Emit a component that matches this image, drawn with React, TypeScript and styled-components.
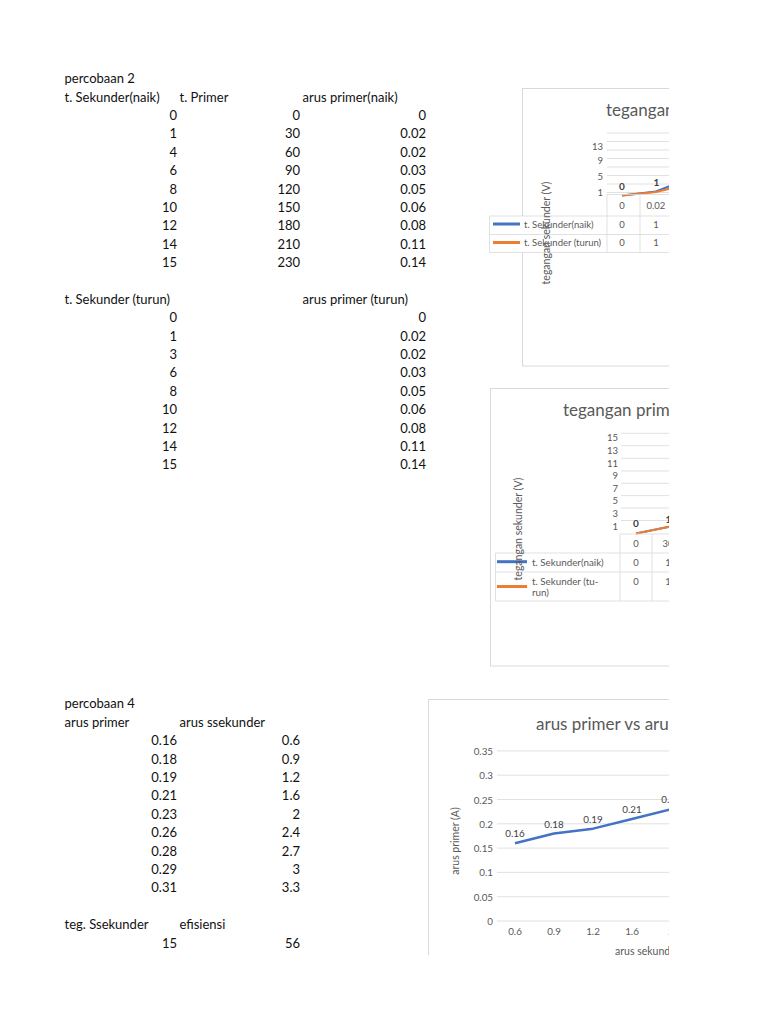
import React from "react";
import styled, { createGlobalStyle } from "styled-components";

const Global = createGlobalStyle`
  html, body { margin: 0; padding: 0; background: #fff; }
`;

const FONT = "Lato, Carlito, 'Liberation Sans', sans-serif";

const Page = styled.div`
  position: relative;
  width: 669px;
  height: 955px;
  overflow: hidden;
  background: #fff;
`;

const Sheet = styled.div`
  display: grid;
  grid-template-columns: 115px 123px 126px;
  grid-auto-rows: 18.4px;
  padding: 69px 0 0 63px;
  font-family: ${FONT};
  font-size: 13px;
  color: #111;
`;

const Cell = styled.div<{ $num?: boolean }>`
  display: flex;
  align-items: center;
  justify-content: ${(p) => (p.$num ? "flex-end" : "flex-start")};
  padding: 0 1px 0 1.5px;
  white-space: nowrap;
`;

const ChartLayer = styled.svg<{ $x: number; $y: number; $w: number; $h: number }>`
  position: absolute;
  left: ${(p) => p.$x}px;
  top: ${(p) => p.$y}px;
  width: ${(p) => p.$w}px;
  height: ${(p) => p.$h}px;
  font-family: ${FONT};
`;

type C = string | number | null;
const rows: C[][] = [
  ["percobaan 2", null, null],
  ["t. Sekunder(naik)", "t. Primer", "arus primer(naik)"],
  [0, 0, 0],
  [1, 30, 0.02],
  [4, 60, 0.02],
  [6, 90, 0.03],
  [8, 120, 0.05],
  [10, 150, 0.06],
  [12, 180, 0.08],
  [14, 210, 0.11],
  [15, 230, 0.14],
  [null, null, null],
  ["t. Sekunder (turun)", null, "arus primer (turun)"],
  [0, null, 0],
  [1, null, 0.02],
  [3, null, 0.02],
  [6, null, 0.03],
  [8, null, 0.05],
  [10, null, 0.06],
  [12, null, 0.08],
  [14, null, 0.11],
  [15, null, 0.14],
  ...Array.from({ length: 12 }, () => [null, null, null] as C[]),
  ["percobaan 4", null, null],
  ["arus primer", "arus ssekunder", null],
  [0.16, 0.6, null],
  [0.18, 0.9, null],
  [0.19, 1.2, null],
  [0.21, 1.6, null],
  [0.23, 2, null],
  [0.26, 2.4, null],
  [0.28, 2.7, null],
  [0.29, 3, null],
  [0.31, 3.3, null],
  [null, null, null],
  ["teg. Ssekunder", "efisiensi", null],
  [15, 56, null],
];

const GRID = "#d9d9d9";
const TXT = "#595959";
const BLUE = "#4472c4";
const ORANGE = "#ed7d31";

const Chart1 = () => {
  const grid = [133, 141.5, 150, 158.5, 167, 175.5, 184];
  return (
    <ChartLayer $x={485} $y={85} $w={184} $h={290} viewBox="485 85 184 290">
      <rect x={522.5} y={88.5} width={200} height={277.5} fill="#fff" stroke={GRID} />
      <text x={606} y={116} fontSize={17} fill={TXT}>tegangan primer vs tegangan sekunder</text>
      {grid.map((y) => (
        <line key={y} x1={607} x2={680} y1={y} y2={y} stroke={GRID} strokeWidth={0.8} />
      ))}
      <line x1={607} x2={680} y1={192.5} y2={192.5} stroke={GRID} strokeWidth={0.8} />
      {[
        ["13", 146],
        ["9", 160],
        ["5", 176],
        ["1", 192],
      ].map(([t, y]) => (
        <text key={t} x={603} y={y as number} fontSize={9.5} fill={TXT} textAnchor="end" dominantBaseline="central">
          {t}
        </text>
      ))}
      <polyline points="622,195.5 656,191.5 690,178" fill="none" stroke={BLUE} strokeWidth={2.2} />
      <polyline points="622,195.5 656,192 690,184" fill="none" stroke={ORANGE} strokeWidth={2.2} />
      <text x={622} y={186} fontSize={10} fill="#404040" fontWeight={700} textAnchor="middle" dominantBaseline="central">0</text>
      <text x={656.5} y={182} fontSize={10} fill="#404040" fontWeight={700} textAnchor="middle" dominantBaseline="central">1</text>
      <rect x={489.5} y={216} width={200} height={36.5} fill="#fff" stroke="none" />
      <g stroke={GRID} strokeWidth={0.8} fill="none">
        <line x1={607} x2={680} y1={194.5} y2={194.5} />
        <line x1={489.5} x2={680} y1={216} y2={216} />
        <line x1={489.5} x2={680} y1={234.5} y2={234.5} />
        <line x1={489.5} x2={680} y1={252.5} y2={252.5} />
        <line x1={489.5} x2={489.5} y1={216} y2={252.5} />
        <line x1={607} x2={607} y1={194.5} y2={252.5} />
        <line x1={640} x2={640} y1={194.5} y2={252.5} />
      </g>
      <g fontSize={9.5} fill={TXT} textAnchor="middle" dominantBaseline="central">
        <text x={622} y={205}>0</text>
        <text x={656} y={205}>0.02</text>
        <text x={622} y={224}>0</text>
        <text x={656} y={224}>1</text>
        <text x={622} y={242.5}>0</text>
        <text x={656} y={242.5}>1</text>
      </g>
      <line x1={493} x2={520} y1={224} y2={224} stroke={BLUE} strokeWidth={3} />
      <line x1={493} x2={520} y1={242.5} y2={242.5} stroke={ORANGE} strokeWidth={3} />
      <g fontSize={9.5} fill={TXT} dominantBaseline="central">
        <text x={524} y={224}>t. Sekunder(naik)</text>
        <text x={524} y={242.5}>t. Sekunder (turun)</text>
      </g>
      <text
        x={0}
        y={0}
        fontSize={10.5}
        fill={TXT}
        textAnchor="middle"
        dominantBaseline="central"
        transform="translate(545.5 233) rotate(-90)"
      >
        tegangan sekunder (V)
      </text>
    </ChartLayer>
  );
};

const Chart2 = () => {
  const grid = [433.3, 445.7, 458.3, 471, 483.3, 495.6, 508, 520.5];
  const labels: [string, number][] = [
    ["15", 437.7],
    ["13", 450.5],
    ["11", 463.5],
    ["9", 475.5],
    ["7", 488],
    ["5", 500.5],
    ["3", 513],
    ["1", 526],
  ];
  return (
    <ChartLayer $x={488} $y={385} $w={181} $h={285} viewBox="488 385 181 285">
      <rect x={490.5} y={388.5} width={200} height={277.5} fill="#fff" stroke={GRID} />
      <text x={563} y={416} fontSize={17} fill={TXT}>tegangan primer vs tegangan sekunder</text>
      {grid.map((y) => (
        <line key={y} x1={621} x2={680} y1={y} y2={y} stroke={GRID} strokeWidth={0.8} />
      ))}
      {labels.map(([t, y]) => (
        <text key={t} x={618} y={y} fontSize={9.5} fill={TXT} textAnchor="end" dominantBaseline="central">
          {t}
        </text>
      ))}
      <polyline points="636,533.5 668,527 700,519" fill="none" stroke={BLUE} strokeWidth={2.2} />
      <polyline points="636,533.5 668,527 700,520" fill="none" stroke={ORANGE} strokeWidth={2.2} />
      <text x={636} y={523} fontSize={10} fill="#404040" fontWeight={700} textAnchor="middle" dominantBaseline="central">0</text>
      <text x={668.5} y={519} fontSize={10} fill="#404040" fontWeight={700} textAnchor="middle" dominantBaseline="central">1</text>
      <g stroke={GRID} strokeWidth={0.8} fill="none">
        <line x1={620} x2={680} y1={534} y2={534} />
        <line x1={495.5} x2={680} y1={553} y2={553} />
        <line x1={495.5} x2={680} y1={572} y2={572} />
        <line x1={495.5} x2={680} y1={601} y2={601} />
        <line x1={495.5} x2={495.5} y1={553} y2={601} />
        <line x1={620} x2={620} y1={534} y2={601} />
        <line x1={652} x2={652} y1={534} y2={601} />
      </g>
      <g fontSize={9.5} fill={TXT} textAnchor="middle" dominantBaseline="central">
        <text x={636} y={543}>0</text>
        <text x={668} y={543}>30</text>
        <text x={636} y={562}>0</text>
        <text x={668} y={562}>1</text>
        <text x={636} y={581}>0</text>
        <text x={668} y={581}>1</text>
      </g>
      <line x1={497} x2={527} y1={561.7} y2={561.7} stroke={BLUE} strokeWidth={3} />
      <line x1={497} x2={527} y1={586.5} y2={586.5} stroke={ORANGE} strokeWidth={3} />
      <g fontSize={9.8} fill={TXT} dominantBaseline="central">
        <text x={532} y={562}>t. Sekunder(naik)</text>
        <text x={532} y={581}>t. Sekunder (tu-</text>
        <text x={532} y={591.5}>run)</text>
      </g>
      <text
        x={0}
        y={0}
        fontSize={10.5}
        fill={TXT}
        textAnchor="middle"
        dominantBaseline="central"
        transform="translate(518 529) rotate(-90)"
      >
        tegangan sekunder (V)
      </text>
    </ChartLayer>
  );
};

const Chart3 = () => {
  const y0 = 921;
  const step = 24.3;
  const ticks = ["0", "0.05", "0.1", "0.15", "0.2", "0.25", "0.3", "0.35"];
  const xs = ["0.6", "0.9", "1.2", "1.6", "2", "2.4", "2.7", "3", "3.3"];
  const vals = [0.16, 0.18, 0.19, 0.21, 0.23, 0.26, 0.28, 0.29, 0.31];
  const px = (i: number) => 515 + 39 * i;
  const py = (v: number) => y0 - (v / 0.05) * step;
  return (
    <ChartLayer $x={425} $y={695} $w={244} $h={260} viewBox="425 695 244 260">
      <rect x={428.5} y={699.5} width={300} height={300} fill="#fff" stroke={GRID} />
      <text x={536} y={729.5} fontSize={17} fill={TXT}>arus primer vs arus sekunder</text>
      {ticks.map((t, i) => (
        <g key={t}>
          <line x1={497} x2={700} y1={y0 - i * step} y2={y0 - i * step} stroke={GRID} strokeWidth={0.8} />
          <text x={493} y={y0 - i * step} fontSize={9.8} fill={TXT} textAnchor="end" dominantBaseline="central">
            {t}
          </text>
        </g>
      ))}
      {xs.map((t, i) => (
        <text key={t} x={px(i)} y={930.5} fontSize={9.8} fill={TXT} textAnchor="middle" dominantBaseline="central">
          {t}
        </text>
      ))}
      <polyline
        points={vals.map((v, i) => `${px(i)},${py(v)}`).join(" ")}
        fill="none"
        stroke={BLUE}
        strokeWidth={2.5}
        strokeLinejoin="round"
      />
      {vals.map((v, i) => (
        <text key={i} x={px(i)} y={py(v) - 10} fontSize={9.8} fill="#404040" textAnchor="middle" dominantBaseline="central">
          {v}
        </text>
      ))}
      <text x={615} y={951} fontSize={10.5} fill={TXT} dominantBaseline="central">arus sekunder (A)</text>
      <text
        x={0}
        y={0}
        fontSize={10.5}
        fill={TXT}
        textAnchor="middle"
        dominantBaseline="central"
        transform="translate(455 841) rotate(-90)"
      >
        arus primer (A)
      </text>
    </ChartLayer>
  );
};

export default function App() {
  return (
    <>
      <Global />
      <Page>
        <Sheet>
          {rows.map((r, ri) =>
            r.map((c, ci) => (
              <Cell key={`${ri}-${ci}`} $num={typeof c === "number"}>
                {c === null ? "" : String(c)}
              </Cell>
            ))
          )}
        </Sheet>
        <Chart1 />
        <Chart2 />
        <Chart3 />
      </Page>
    </>
  );
}
